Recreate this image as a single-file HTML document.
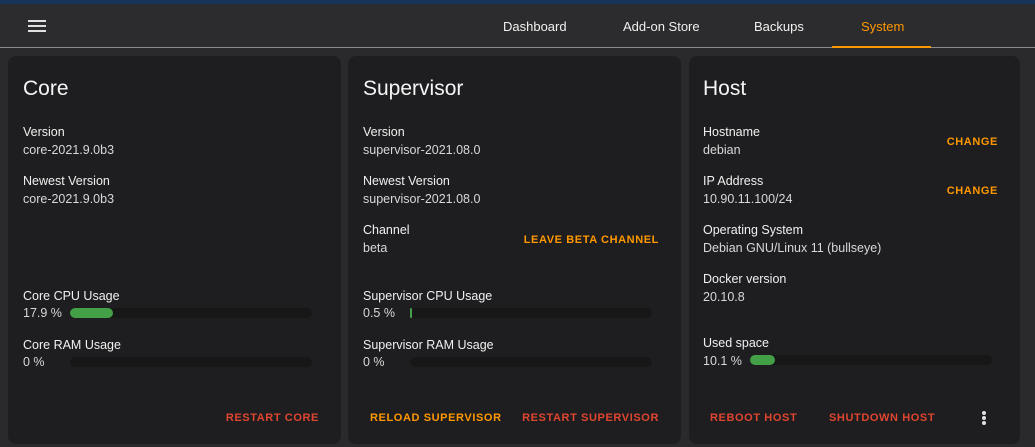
<!DOCTYPE html>
<html><head><style>
*{margin:0;padding:0;box-sizing:border-box}
body{width:1035px;height:447px;overflow:hidden;background:#2a2a2c;font-family:"Liberation Sans",sans-serif;color:#e1e1e1;position:relative}
.a{position:absolute;white-space:nowrap}
.top{left:0;top:0;width:1035px;height:4px;background:#183459}
.hdr{left:0;top:4px;width:1035px;height:44px;background:#2c2c2e;border-bottom:1px solid #8a8a8a}
.tab{font-size:13px;color:#f0f0f0;top:19px}
.card{background:#1e1e20;border-radius:8px;top:56px;height:388px}
.t{font-size:21px;color:#f5f5f5}
.l{font-size:12.5px;color:#f0f0f0}
.v{font-size:12.5px;color:#d8d8d8}
.bar{height:10px;border-radius:5px;background:#171718}
.fill{height:10px;border-radius:5px;background:#43a047;left:0;top:0}
.btn{font-size:11px;font-weight:bold;letter-spacing:0.6px}
.o{color:#ff9800}.r{color:#e0452f}
</style></head><body>
<div class="a top"></div>
<div class="a hdr"></div>
<div class="a" style="left:28px;top:20px;width:18px;height:2px;background:#e0e0e0;box-shadow:0 5px 0 #e0e0e0,0 10px 0 #e0e0e0"></div>
<div class="a tab" style="left:503px">Dashboard</div>
<div class="a tab" style="left:623px">Add-on Store</div>
<div class="a tab" style="left:754px">Backups</div>
<div class="a tab" style="left:861px;color:#ff9800">System</div>
<div class="a" style="left:832px;top:46px;width:99px;height:2px;background:#ff9800"></div>

<div class="a card" style="left:8px;width:333px"></div>
<div class="a card" style="left:348px;width:333px"></div>
<div class="a card" style="left:689px;width:331px"></div>

<div class="a t" style="left:23px;top:77px">Core</div>
<div class="a l" style="left:23px;top:125px">Version</div>
<div class="a v" style="left:23px;top:143px">core-2021.9.0b3</div>
<div class="a l" style="left:23px;top:174px">Newest Version</div>
<div class="a v" style="left:23px;top:192px">core-2021.9.0b3</div>
<div class="a l" style="left:23px;top:289px">Core CPU Usage</div>
<div class="a v" style="left:23px;top:306px">17.9 %</div>
<div class="a bar" style="left:70px;top:308px;width:242px"><div class="a fill" style="width:43px"></div></div>
<div class="a l" style="left:23px;top:338px">Core RAM Usage</div>
<div class="a v" style="left:23px;top:355px">0 %</div>
<div class="a bar" style="left:70px;top:357px;width:242px"></div>
<div class="a btn r" style="right:716px;top:412px">RESTART CORE</div>

<div class="a t" style="left:363px;top:77px">Supervisor</div>
<div class="a l" style="left:363px;top:125px">Version</div>
<div class="a v" style="left:363px;top:143px">supervisor-2021.08.0</div>
<div class="a l" style="left:363px;top:174px">Newest Version</div>
<div class="a v" style="left:363px;top:192px">supervisor-2021.08.0</div>
<div class="a l" style="left:363px;top:223px">Channel</div>
<div class="a v" style="left:363px;top:241px">beta</div>
<div class="a btn o" style="right:376px;top:234px">LEAVE BETA CHANNEL</div>
<div class="a l" style="left:363px;top:289px">Supervisor CPU Usage</div>
<div class="a v" style="left:363px;top:306px">0.5 %</div>
<div class="a bar" style="left:410px;top:308px;width:242px"><div class="a fill" style="width:2px;left:0;border-radius:1px"></div></div>
<div class="a l" style="left:363px;top:338px">Supervisor RAM Usage</div>
<div class="a v" style="left:363px;top:355px">0 %</div>
<div class="a bar" style="left:410px;top:357px;width:242px"></div>
<div class="a btn o" style="left:370px;top:412px">RELOAD SUPERVISOR</div>
<div class="a btn r" style="right:376px;top:412px">RESTART SUPERVISOR</div>

<div class="a t" style="left:703px;top:77px">Host</div>
<div class="a l" style="left:703px;top:125px">Hostname</div>
<div class="a v" style="left:703px;top:143px">debian</div>
<div class="a btn o" style="right:37px;top:136px">CHANGE</div>
<div class="a l" style="left:703px;top:174px">IP Address</div>
<div class="a v" style="left:703px;top:192px">10.90.11.100/24</div>
<div class="a btn o" style="right:37px;top:185px">CHANGE</div>
<div class="a l" style="left:703px;top:223px">Operating System</div>
<div class="a v" style="left:703px;top:241px">Debian GNU/Linux 11 (bullseye)</div>
<div class="a l" style="left:703px;top:272px">Docker version</div>
<div class="a v" style="left:703px;top:290px">20.10.8</div>
<div class="a l" style="left:703px;top:336px">Used space</div>
<div class="a v" style="left:703px;top:354px">10.1 %</div>
<div class="a bar" style="left:750px;top:355px;width:242px"><div class="a fill" style="width:25px"></div></div>
<div class="a btn r" style="left:710px;top:412px">REBOOT HOST</div>
<div class="a btn r" style="left:829px;top:412px">SHUTDOWN HOST</div>
<div class="a" style="left:982px;top:411px;width:4px;height:4px;border-radius:2px;background:#e0e0e0;box-shadow:0 5px 0 #e0e0e0,0 10px 0 #e0e0e0"></div>
</body></html>
